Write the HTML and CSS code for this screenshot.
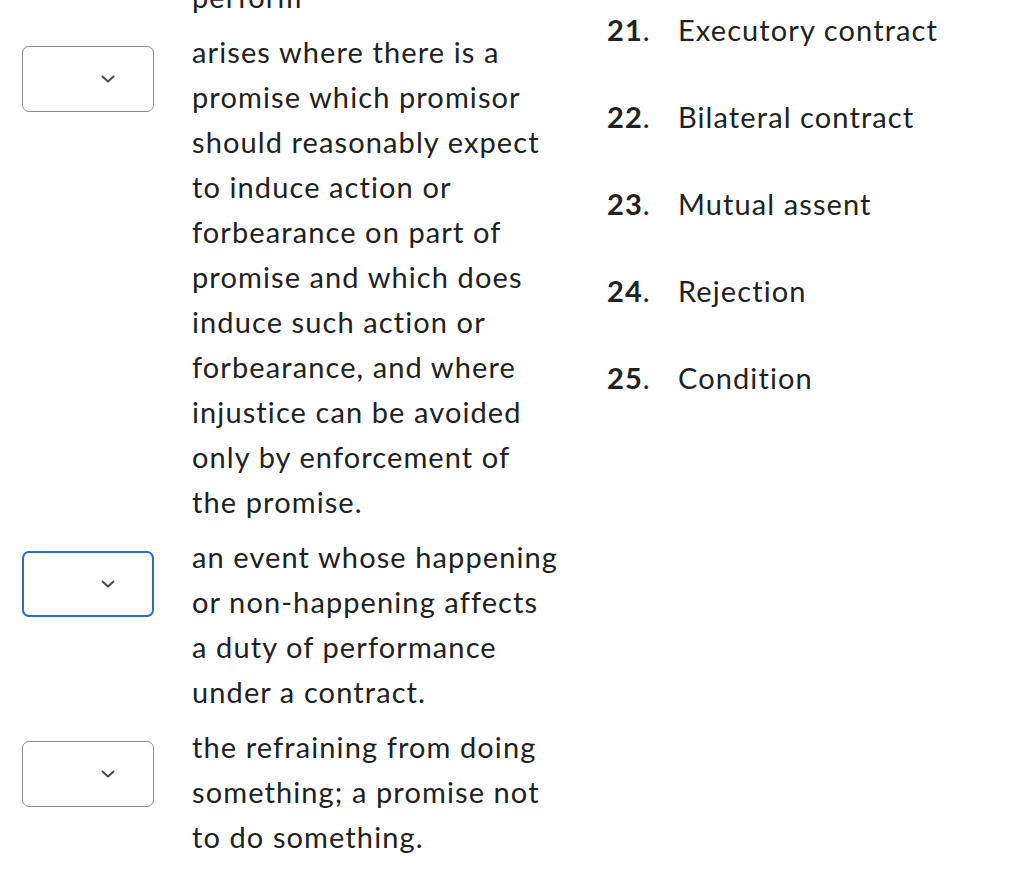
FILE: index.html
```html
<!DOCTYPE html>
<html lang="en">
<head>
<meta charset="utf-8">
<title>Matching</title>
<link rel="stylesheet" href="styles.css">
</head>
<body>
<div class="page">
  <div class="questions">
    <div class="item">
      <div class="slot"></div>
      <div class="text">perform</div>
    </div>
    <div class="item">
      <div class="slot"><div class="select"><svg class="chev" width="14" height="8" viewBox="0 0 14 8"><path d="M1.5 1.5 L7 6.5 L12.5 1.5" fill="none" stroke="#4a4a4a" stroke-width="2" stroke-linecap="round" stroke-linejoin="round"/></svg></div></div>
      <div class="text">arises where there is a promise which promisor should reasonably expect to induce action or forbearance on part of promise and which does induce such action or forbearance, and where injustice can be avoided only by enforcement of the promise.</div>
    </div>
    <div class="item">
      <div class="slot"><div class="select focused"><svg class="chev" width="14" height="8" viewBox="0 0 14 8"><path d="M1.5 1.5 L7 6.5 L12.5 1.5" fill="none" stroke="#4a4a4a" stroke-width="2" stroke-linecap="round" stroke-linejoin="round"/></svg></div></div>
      <div class="text">an event whose happening or non-happening affects a duty of performance under a contract.</div>
    </div>
    <div class="item">
      <div class="slot"><div class="select"><svg class="chev" width="14" height="8" viewBox="0 0 14 8"><path d="M1.5 1.5 L7 6.5 L12.5 1.5" fill="none" stroke="#4a4a4a" stroke-width="2" stroke-linecap="round" stroke-linejoin="round"/></svg></div></div>
      <div class="text">the refraining from doing something; a promise not to do something.</div>
    </div>
  </div>
  <ol class="answers">
    <li><span class="num">21<span class="dot">.</span></span><span class="term">Executory contract</span></li>
    <li><span class="num">22<span class="dot">.</span></span><span class="term">Bilateral contract</span></li>
    <li><span class="num">23<span class="dot">.</span></span><span class="term">Mutual assent</span></li>
    <li><span class="num">24<span class="dot">.</span></span><span class="term">Rejection</span></li>
    <li><span class="num">25<span class="dot">.</span></span><span class="term">Condition</span></li>
  </ol>
</div>
</body>
</html>
```

FILE: styles.css
```css
html, body {
  margin: 0;
  padding: 0;
  background: #ffffff;
}

body {
  font-family: Lato, "Noto Sans", sans-serif;
  font-size: 29px;
  letter-spacing: 1.1px;
  line-height: 45px;
  color: #202122;
  overflow: hidden;
}

.page {
  display: flex;
  align-items: flex-start;
}

.questions {
  width: 585px;
  margin-top: -26px;
  padding-left: 22px;
  box-sizing: border-box;
}

.item {
  display: flex;
  gap: 38px;
  padding-bottom: 10px;
}

.slot {
  flex: 0 0 132px;
}

.select {
  margin-top: 17px;
  height: 66px;
  box-sizing: border-box;
  border: 1px solid #8c8c8c;
  border-radius: 7px;
  display: flex;
  align-items: center;
  justify-content: flex-end;
  padding-right: 38px;
  background: #fff;
}

.select.focused {
  border: 2px solid #2e6dbb;
  padding-right: 37px;
}

.chev {
  display: block;
}

.text {
  width: 368px;
}

.answers {
  list-style: none;
  margin: 0;
  padding: 7px 0 0 22px;
}

.answers li {
  display: flex;
  margin-bottom: 42px;
}

.num {
  font-weight: 700;
  width: 71px;
  flex: 0 0 71px;
}

.dot {
  font-weight: 400;
}
```
